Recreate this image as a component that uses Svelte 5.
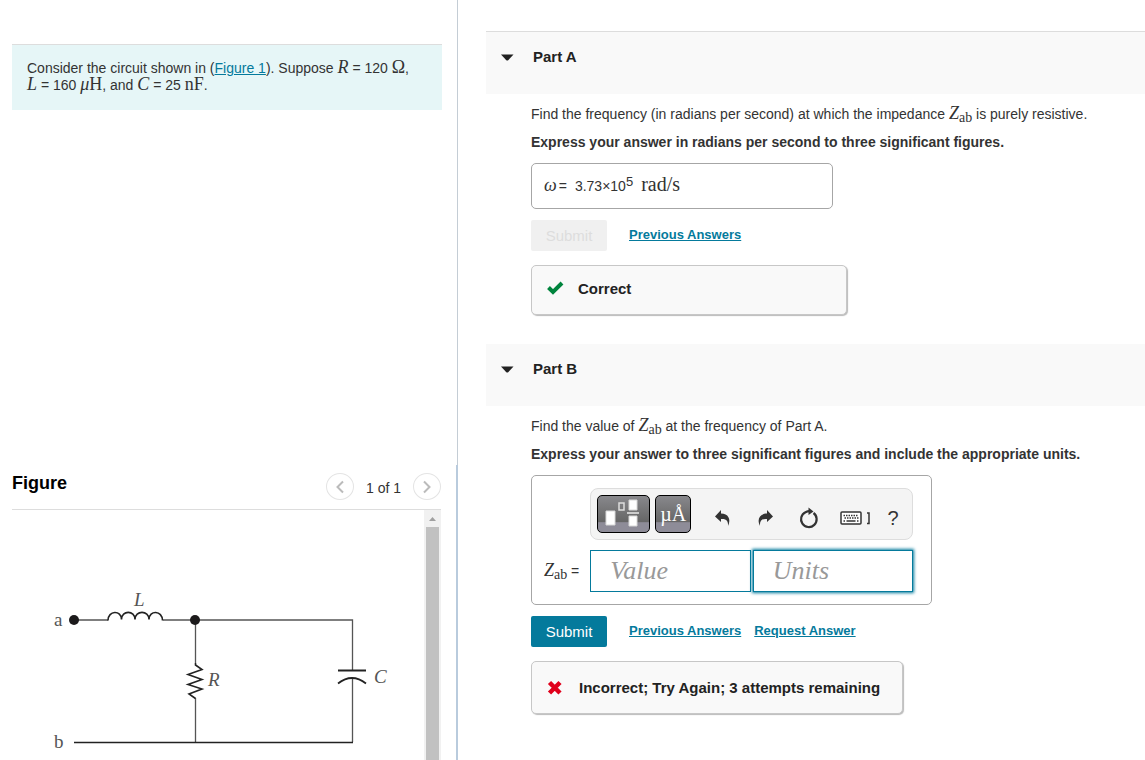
<script>
  let value = $state("");
  let units = $state("");
  let openA = $state(true);
  let openB = $state(true);
</script>

{#snippet zab()}
  <span class="math"><i>Z</i><sub>ab</sub></span>
{/snippet}

{#snippet caret()}
  <svg class="caret" width="13" height="7" viewBox="0 0 13 7" aria-hidden="true">
    <path d="M0 0.5H12.5L7.2 6.2Q6.3 7 5.3 6.2Z" fill="#222" />
  </svg>
{/snippet}

<div class="page">
  <aside class="left">
    <section class="intro">
      <p class="problem">
        Consider the circuit shown in (<a href="#figure">Figure 1</a>). Suppose
        <i class="math">R</i> = 120 <span class="math">Ω</span>,
        <br />
        <i class="math">L</i> = 160 <span class="math"><i>μ</i>H</span>, and <i class="math">C</i> = 25
        <span class="math">nF</span>.
      </p>
    </section>

    <section class="figure" id="figure">
      <header class="figure-head">
        <h2>Figure</h2>
        <div class="pager">
          <button class="round" aria-label="Previous figure">
            <svg width="10" height="14" viewBox="0 0 10 14"><path d="M8 1.5L2.5 7L8 12.5" /></svg>
          </button>
          <span>1 of 1</span>
          <button class="round" aria-label="Next figure">
            <svg width="10" height="14" viewBox="0 0 10 14"><path d="M2 1.5L7.5 7L2 12.5" /></svg>
          </button>
        </div>
      </header>
      <div class="figure-body">
        <div class="drawing">
          <svg width="412" height="250" viewBox="12 510 412 250" role="img" aria-label="Circuit diagram">
            <g fill="none" stroke="#555" stroke-width="1.3">
              <path d="M74 620H108M163 620H352.500V670M352.500 679V742" />
              <path d="M195.500 620V663M195.500 698V742" />
            </g>
            <path d="M74 742.500H353" stroke="#222" stroke-width="1.4" />
            <g fill="none" stroke="#222" stroke-width="1.6">
              <path d="M108 620.500C108 610 121.500 610 121.500 619.500C121.500 610 135 610 135 619.500C135 610 149 610 149 619.500C149 610 162.500 610 162.500 620.500" />
              <path d="M195.500 663V665L202 669.500L188 674.500L202 679.500L188 684.500L202 689L189 694L195.500 698.500" />
              <path d="M338 670.500H366M338 683.500Q352 672.500 366 683.500" stroke-width="1.8" />
            </g>
            <circle cx="74" cy="620" r="5" fill="#1c1a1b" />
            <circle cx="195" cy="620" r="5" fill="#1c1a1b" />
            <g class="labels">
              <text x="54" y="626">a</text>
              <text x="54" y="748">b</text>
              <text x="134" y="606" font-style="italic">L</text>
              <text x="208" y="686" font-style="italic">R</text>
              <text x="374" y="683" font-style="italic">C</text>
            </g>
          </svg>
        </div>
        <div class="scrollbar" aria-hidden="true">
          <svg width="17" height="17" viewBox="0 0 17 17"><path d="M5 11H12L8.500 7Z" fill="#a0a0a0" /></svg>
          <div class="thumb"></div>
        </div>
      </div>
    </section>
  </aside>

  <main>
    <section class="part">
      <header class="part-head first">
        <button onclick={() => (openA = !openA)} aria-expanded={openA}>{@render caret()}Part A</button>
      </header>
      {#if openA}
        <div class="part-body">
          <p>
            Find the frequency (in radians per second) at which the impedance {@render zab()} is purely resistive.
          </p>
          <p class="instruction">Express your answer in radians per second to three significant figures.</p>
          <div class="answer">
            <i class="math">ω</i>
            <span>=</span>
            <span class="number">3.73×10<sup>5</sup></span>
            <span class="math unit">rad/s</span>
          </div>
          <div class="actions">
            <button class="submit" disabled>Submit</button>
            <a href="#previous-a">Previous Answers</a>
          </div>
          <div class="feedback correct">
            <svg width="17" height="14" viewBox="0 0 17 14" aria-hidden="true">
              <path d="M1.500 6.500L6 11L15 2" fill="none" stroke="#00843d" stroke-width="4" />
            </svg>
            Correct
          </div>
        </div>
      {/if}
    </section>

    <section class="part">
      <header class="part-head">
        <button onclick={() => (openB = !openB)} aria-expanded={openB}>{@render caret()}Part B</button>
      </header>
      {#if openB}
        <div class="part-body">
          <p>Find the value of {@render zab()} at the frequency of Part A.</p>
          <p class="instruction">Express your answer to three significant figures and include the appropriate units.</p>
          <div class="entry">
            <div class="toolbar">
              <button class="dark wide" aria-label="Templates">
                <svg width="51" height="36" viewBox="1 1 51 36">
                  <path d="M9 16H18V30H9ZM32 5H40V15H32ZM32 21H40V31H32Z" fill="#fff" stroke="#d8d8d8" />
                  <path d="M22 8H27V15H22Z" fill="none" stroke="#ddd" stroke-width="1.5" />
                  <path d="M30 18H42" stroke="#ccc" stroke-width="2" />
                </svg>
              </button>
              <button class="dark" aria-label="Units">µÅ</button>
              <button class="tool" aria-label="Undo">
                <svg width="18" height="18" viewBox="0 0 18 18">
                  <path d="M7 1L1 7.500L7 13V10C12 9.500 14.500 11.500 14 17C17.500 10 14 4.500 7 4.500Z" fill="#333" />
                </svg>
              </button>
              <button class="tool" aria-label="Redo">
                <svg width="18" height="18" viewBox="0 0 18 18">
                  <path d="M10 1L16 7.500L10 13V10C5 9.500 2.500 11.500 3 17C-0.500 10 3 4.500 10 4.500Z" fill="#333" />
                </svg>
              </button>
              <button class="tool" aria-label="Reset">
                <svg width="20" height="22" viewBox="0 0 20 22">
                  <path d="M14.500 6A7.800 7.800 0 1 1 6.500 5.200Q8.500 4.200 10.500 4.200" fill="none" stroke="#333" stroke-width="2.200" />
                  <path d="M9.500 0.500L14.500 4.500L9.500 8Z" fill="#333" />
                </svg>
              </button>
              <button class="tool keys" aria-label="Keyboard shortcuts">
                <svg width="31" height="14" viewBox="0 0 31 14">
                  <rect x="1" y="1" width="20" height="12" rx="1" fill="#fff" stroke="#333" stroke-width="1.500" />
                  <path d="M3.500 4.500H18.500M4.500 7H18.500" stroke="#333" stroke-width="1.600" stroke-dasharray="1.500 1" />
                  <path d="M3.500 10H5M6.500 10H15.500M17 10H18.500" stroke="#333" stroke-width="1.600" />
                  <path d="M27 2H29V12.500H27" fill="none" stroke="#333" stroke-width="1.500" />
                </svg>
              </button>
              <button class="tool help" aria-label="Help">?</button>
            </div>
            <label class="lhs" for="value">{@render zab()} =</label>
            <div class="fields">
              <input id="value" placeholder="Value" bind:value />
              <input class="active" aria-label="Units" placeholder="Units" bind:value={units} />
            </div>
          </div>
          <div class="actions">
            <button class="submit">Submit</button>
            <a href="#previous-b">Previous Answers</a>
            <a href="#request">Request Answer</a>
          </div>
          <div class="feedback">
            <svg width="16" height="16" viewBox="0 0 16 16" aria-hidden="true">
              <path d="M2.500 2.500L13 13M13 2.500L2.500 13" stroke="#e0001b" stroke-width="4.500" />
            </svg>
            Incorrect; Try Again; 3 attempts remaining
          </div>
        </div>
      {/if}
    </section>
  </main>
</div>

<style>
  :global(body) {
    margin: 0;
    background: #fff;
  }
  .page {
    display: grid;
    grid-template-columns: 2fr 3fr;
    height: 100vh;
    overflow: hidden;
    font-family: "Liberation Sans", Arial, sans-serif;
    font-size: 14px;
    line-height: 17px;
    color: #333;
  }
  button {
    font: inherit;
    border: 0;
    padding: 0;
    background: none;
    cursor: pointer;
  }
  a {
    color: #047a9c;
  }
  p,
  h2 {
    margin: 0;
  }
  .math {
    font-family: "Liberation Serif", "Times New Roman", serif;
    font-size: 18px;
    line-height: 1px;
  }
  sub {
    font-size: 14px;
    line-height: 1px;
    vertical-align: -3px;
  }

  /* left column */
  .left {
    display: grid;
    grid-template-rows: 93fr 59fr;
    min-width: 0;
    min-height: 0;
  }
  .intro {
    border-right: 1px solid #c4cdd5;
    padding: 44px 15px 0 12px;
  }
  .problem {
    background: #e6f6f7;
    border-top: 1px solid #ddd;
    padding: 15px 0 16px 15px;
  }
  .figure {
    display: flex;
    flex-direction: column;
    min-height: 0;
    border-right: 2px solid #b9cbdd;
    padding: 0 15px 0 12px;
  }
  .figure-head {
    display: flex;
    justify-content: space-between;
    align-items: flex-start;
    height: 44px;
    border-bottom: 1px solid #ddd;
  }
  h2 {
    font-size: 18px;
    line-height: 36px;
    color: #000;
  }
  .pager {
    display: flex;
    align-items: center;
    gap: 12px;
    padding-top: 8px;
  }
  .pager span {
    padding-top: 3px;
  }
  .round {
    display: flex;
    align-items: center;
    justify-content: center;
    box-sizing: border-box;
    width: 28px;
    height: 27px;
    border: 1px solid #e4e4e4;
    border-radius: 50%;
  }
  .round path {
    fill: none;
    stroke: #bbb;
    stroke-width: 2;
  }
  .figure-body {
    flex: 1;
    display: flex;
    min-height: 0;
  }
  .drawing {
    flex: 1;
    overflow: hidden;
  }
  .labels {
    font-family: "Liberation Serif", "Times New Roman", serif;
    font-size: 19px;
    fill: #555;
  }
  .scrollbar {
    display: flex;
    flex-direction: column;
    align-items: center;
    width: 17px;
    background: #f1f1f1;
  }
  .scrollbar svg {
    flex: none;
  }
  .thumb {
    flex: 1;
    width: 13px;
    background: #c1c1c1;
  }

  /* right column */
  main {
    min-width: 0;
    overflow: hidden;
    padding: 31px 0 0 28px;
  }
  .part {
    margin-bottom: 29px;
  }
  .part-head {
    background: #f9f9f9;
    padding: 16px 15px 28px;
  }
  .part-head.first {
    border-top: 1px solid #ddd;
  }
  .part-head button {
    display: flex;
    align-items: center;
    gap: 19px;
    font-size: 15px;
    font-weight: bold;
    line-height: 18px;
    color: #222;
  }
  .part-body {
    padding: 12px 20px 0 45px;
  }
  .part-body p {
    margin-bottom: 11px;
  }
  .part-body .instruction {
    font-weight: bold;
    margin-bottom: 12px;
  }
  .answer {
    display: flex;
    align-items: baseline;
    box-sizing: border-box;
    max-width: 302px;
    border: 1px solid #a6a6a6;
    border-radius: 5px;
    padding: 14px 12px;
    line-height: 16px;
    gap: 2px;
  }
  .number {
    padding: 0 6px;
  }
  .unit {
    font-size: 20px;
  }
  sup {
    font-size: 13px;
    line-height: 1px;
    vertical-align: 5px;
  }
  .actions {
    display: flex;
    align-items: center;
    gap: 13px;
    margin: 11px 0 14px;
    font-size: 13px;
    font-weight: bold;
  }
  .actions a {
    padding-bottom: 2px;
  }
  .submit {
    width: 76px;
    height: 31px;
    margin-right: 9px;
    border-radius: 2px;
    background: #047a9c;
    color: #fff;
    font-size: 15px;
    font-weight: normal;
  }
  .submit:disabled {
    background: #f0f0f0;
    color: #ddd;
  }
  .feedback {
    display: flex;
    align-items: center;
    box-sizing: border-box;
    max-width: 372px;
    min-height: 53px;
    gap: 16px;
    padding: 0 15px;
    border: 1px solid #c7c7c7;
    border-radius: 5px;
    box-shadow: 1px 1px 1px #bbb;
    background: #f9f9f9;
    color: #222;
    font-size: 15px;
    font-weight: bold;
  }
  .feedback.correct {
    max-width: 316px;
    min-height: 50px;
    gap: 14px;
    padding-bottom: 4px;
  }

  .entry {
    display: grid;
    grid-template-columns: auto minmax(0, 1fr);
    align-items: center;
    row-gap: 10px;
    column-gap: 11px;
    box-sizing: border-box;
    max-width: 401px;
    border: 1px solid #a6a6a6;
    border-radius: 5px;
    padding: 12px 18px 12px 12px;
  }
  .toolbar {
    grid-column: 2;
    display: flex;
    align-items: center;
    box-sizing: border-box;
    height: 52px;
    border: 1px solid #ddd;
    border-radius: 8px;
    background: #f4f4f4;
    padding: 0 6px;
  }
  .dark {
    flex: none;
    box-sizing: border-box;
    width: 36px;
    height: 38px;
    margin-right: 5px;
    border: 1px solid #000;
    border-radius: 5px;
    background: linear-gradient(#88888c, #666 72%, #8e8c98 74%, #8e8c98);
    color: #fff;
    font-family: "Liberation Serif", serif;
    font-size: 20px;
    line-height: 36px;
  }
  .dark.wide {
    width: 53px;
  }
  .dark svg {
    display: block;
  }
  .tool {
    flex: none;
    display: flex;
    align-items: center;
    justify-content: center;
    width: 43px;
    height: 38px;
    padding-top: 8px;
    color: #333;
  }
  .dark + .tool {
    margin-left: 5px;
  }
  .tool.keys {
    width: 50px;
  }
  .tool.help {
    flex: 1;
    font-size: 20px;
  }
  .lhs {
    white-space: nowrap;
  }
  .fields {
    display: flex;
    gap: 2px;
  }
  input {
    flex: 1;
    min-width: 0;
    box-sizing: border-box;
    height: 42px;
    border: 1px solid #047a9c;
    border-radius: 0;
    padding: 0 19px;
    font-family: "Liberation Serif", "Times New Roman", serif;
    font-size: 26px;
    outline: 0;
  }
  input::placeholder {
    color: #999;
    font-style: italic;
    opacity: 1;
  }
  input.active {
    box-shadow: 0 0 3px 1px #047a9c;
  }
</style>
